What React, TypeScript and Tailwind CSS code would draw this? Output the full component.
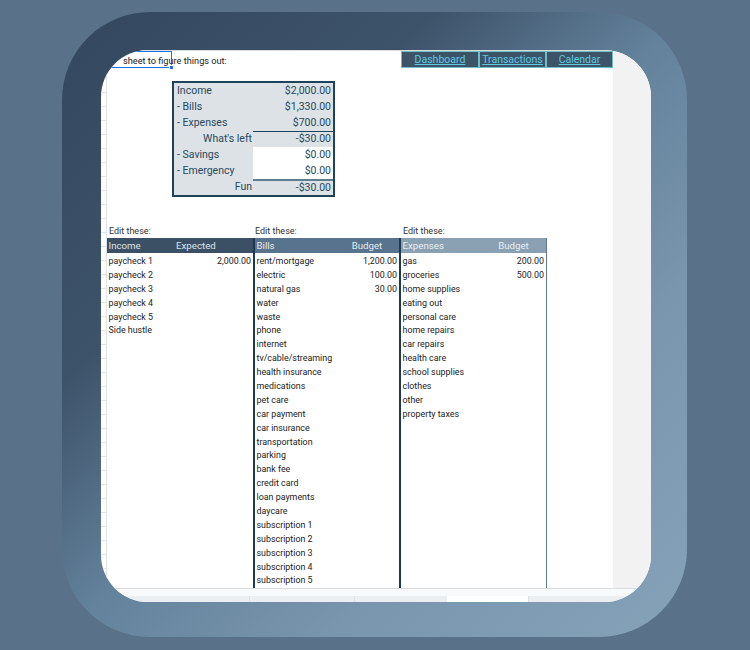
import React from 'react'

type Row = { name: string; amount?: string }

const income: Row[] = [
  { name: 'paycheck 1', amount: '2,000.00' },
  { name: 'paycheck 2' },
  { name: 'paycheck 3' },
  { name: 'paycheck 4' },
  { name: 'paycheck 5' },
  { name: 'Side hustle' },
]

const bills: Row[] = [
  { name: 'rent/mortgage', amount: '1,200.00' },
  { name: 'electric', amount: '100.00' },
  { name: 'natural gas', amount: '30.00' },
  ...[
    'water', 'waste', 'phone', 'internet', 'tv/cable/streaming', 'health insurance',
    'medications', 'pet care', 'car payment', 'car insurance', 'transportation', 'parking',
    'bank fee', 'credit card', 'loan payments', 'daycare', 'subscription 1', 'subscription 2',
    'subscription 3', 'subscription 4', 'subscription 5',
  ].map((name) => ({ name })),
]

const expenses: Row[] = [
  { name: 'gas', amount: '200.00' },
  { name: 'groceries', amount: '500.00' },
  ...[
    'home supplies', 'eating out', 'personal care', 'home repairs', 'car repairs',
    'health care', 'school supplies', 'clothes', 'other', 'property taxes',
  ].map((name) => ({ name })),
]

const summary = [
  { label: 'Income', value: '$2,000.00' },
  { label: '- Bills', value: '$1,330.00' },
  { label: '- Expenses', value: '$700.00' },
  { label: "What's left", value: '-$30.00', right: true, line: 'dark' },
  { label: '- Savings', value: '$0.00', white: true },
  { label: '- Emergency', value: '$0.00', white: true },
  { label: 'Fun', value: '-$30.00', right: true, line: 'gray' },
]

const pad = (rows: Row[]) => [...rows, ...Array.from({ length: 26 - rows.length }, () => ({ name: '' }))]

function Table({
  title,
  rows,
  headBg,
  headText,
  width,
  nameW,
  border,
  amountLabel,
  labelLeft,
}: {
  title: string
  rows: Row[]
  headBg: string
  headText: string
  width: string
  nameW: string
  border: string
  amountLabel: string
  labelLeft?: boolean
}) {
  return (
    <div className={`flex flex-col ${width}`}>
      <div className="h-[14px] flex items-center pl-[2px] text-[9px] leading-none text-[#333]">Edit these:</div>
      <div className={`flex flex-col ${border}`}>
        <div className={`h-[15px] pt-[1.5px] flex items-center text-[9.7px] leading-none ${headBg} ${headText}`}>
          <div className={`${nameW} pl-[1.5px]`}>{title}</div>
          <div className={`flex-1 ${labelLeft ? 'pl-[3px]' : 'text-center'}`}>{amountLabel}</div>
        </div>
        <div className="pt-[1.5px] flex flex-col">
          {pad(rows).map((r, i) => (
            <div key={i} className="h-[13.9px] flex items-center text-[8.9px] leading-none text-[#222]">
              <div className={`${nameW} pl-[1.5px] whitespace-nowrap`}>{r.name}</div>
              <div className="flex-1 text-right pr-[2px]">{r.amount}</div>
            </div>
          ))}
        </div>
      </div>
    </div>
  )
}

export default function App() {
  return (
    <div className="w-[750px] h-[650px] bg-[#5a7289] pt-[12px] pl-[62px] font-[family-name:Roboto,sans-serif] overflow-hidden">
      <div className="w-[625px] h-[625px] rounded-[88px] pt-[38px] pl-[39px] pr-[36px] pb-[35px] bg-[linear-gradient(135deg,#33485e_0%,#3d536a_30%,#64829c_50%,#7a96ae_72%,#86a2b9_100%)]">
        <div className="w-[550px] h-[552px] rounded-[47px] overflow-hidden bg-white flex flex-col">
          <div className="h-[538px] flex">
            {/* sheet */}
            <div className="w-[512px] h-full border-t border-[#dadce0] flex overflow-hidden">
              <div className="w-[6px] h-full border-r border-[#e3e3e3] bg-[repeating-linear-gradient(to_bottom,transparent_0px,transparent_13px,#e3e3e3_13px,#e3e3e3_14px)]" />
              <div className="w-[506px] flex flex-col">
                {/* row 1 */}
                <div className="h-[16px] flex">
                  <div className="relative w-[65px] h-[17px] border-[1.5px] border-[#1a73e8] flex items-center pt-[2px]">
                    <span className="pl-[15px] text-[9.2px] leading-none text-[#222] whitespace-nowrap">sheet to figure things out:</span>
                    <div className="absolute -right-[3px] -bottom-[3px] w-[5px] h-[5px] bg-[#1a73e8] border border-white" />
                  </div>
                  <div className="w-[229px]" />
                  {[
                    ['Dashboard', 'w-[78px]'],
                    ['Transactions', 'w-[67px]'],
                    ['Calendar', 'w-[67px]'],
                  ].map(([t, w]) => (
                    <div
                      key={t}
                      className={`${w} h-[17px] pt-[1px] bg-[#3d5367] border border-[#6dbec7] flex items-center justify-center text-[10.5px] leading-none text-[#5ccbe4] underline`}
                    >
                      {t}
                    </div>
                  ))}
                </div>

                {/* summary box */}
                <div className="mt-[14px] ml-[65px] w-[163px] h-[116px] border-2 border-[#1f4358] bg-[#dce2e5] flex flex-col text-[10.5px] leading-none text-[#29485c]">
                  {summary.map((s) => (
                    <div key={s.label} className="h-[16px] flex">
                      <div className={`w-[79px] flex items-center ${s.right ? 'justify-end pr-[1px]' : 'pl-[3px]'}`}>{s.label}</div>
                      <div
                        className={`w-[80px] flex items-center justify-end pr-[2px] ${s.white ? 'bg-white' : ''} ${
                          s.line === 'dark' ? 'border-t-[1.5px] border-[#1f4358]' : s.line === 'gray' ? 'border-t-[2px] border-[#5f7d8c]' : ''
                        }`}
                      >
                        {s.value}
                      </div>
                    </div>
                  ))}
                </div>

                {/* tables */}
                <div className="mt-[27px] flex">
                  <Table
                    title="Income"
                    rows={income}
                    headBg="bg-[#3b5064]"
                    headText="text-[#dde4ea]"
                    width="w-[146px]"
                    nameW="w-[66px]"
                    border=""
                    amountLabel="Expected"
                    labelLeft
                  />
                  <Table
                    title="Bills"
                    rows={bills}
                    headBg="bg-[#58738d]"
                    headText="text-[#e6ecf0]"
                    width="w-[148px]"
                    nameW="w-[80px]"
                    border="border-x-2 border-[#1e3a50]"
                    amountLabel="Budget"
                  />
                  <Table
                    title="Expenses"
                    rows={expenses}
                    headBg="bg-[#8aa1b4]"
                    headText="text-[#e9eef2]"
                    width="w-[146px]"
                    nameW="w-[80px]"
                    border="border-r-[1.5px] border-[#5f7990]"
                    amountLabel="Budget"
                  />
                </div>
              </div>
            </div>
            <div className="flex-1 bg-[#f2f2f2]" />
          </div>

          {/* sheet tabs */}
          <div className="h-[14px] flex flex-col border-t border-[#dadce0]">
            <div className="h-[7px] bg-[#f8f9fa]" />
            <div className="flex-1 flex bg-[#eceff1]">
              <div className="w-[149px] border-r border-[#dfe3e6]" />
              <div className="w-[105px] border-r border-[#dfe3e6]" />
              <div className="w-[92px]" />
              <div className="w-[81px] bg-white" />
              <div className="flex-1 border-l border-[#dfe3e6]" />
            </div>
          </div>
        </div>
      </div>
    </div>
  )
}
